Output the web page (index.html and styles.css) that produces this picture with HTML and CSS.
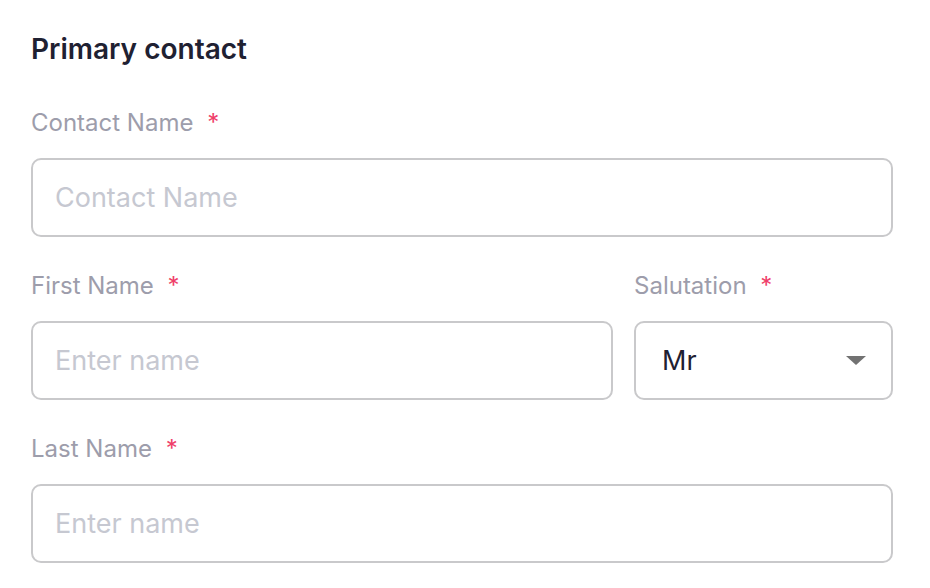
FILE: index.html
```html
<!DOCTYPE html>
<html lang="en">
<head>
  <meta charset="UTF-8">
  <meta name="viewport" content="width=device-width, initial-scale=1">
  <title>Primary contact</title>
  <link rel="stylesheet" href="styles.css">
</head>
<body>
  <!-- Formulario de contacto principal -->
  <form class="contact-form">
    <h2 class="section-title">Primary contact</h2>

    <div class="field">
      <label class="field-label" for="contactName">Contact Name <span class="required">*</span></label>
      <input class="field-input" id="contactName" type="text" placeholder="Contact Name">
    </div>

    <div class="row">
      <div class="field field-grow">
        <label class="field-label" for="firstName">First Name <span class="required">*</span></label>
        <input class="field-input" id="firstName" type="text" placeholder="Enter name">
      </div>
      <div class="field field-salutation">
        <label class="field-label" for="salutation">Salutation <span class="required">*</span></label>
        <div class="select-wrap">
          <select class="field-input field-select" id="salutation">
            <option>Mr</option>
            <option>Mrs</option>
            <option>Ms</option>
          </select>
          <span class="select-arrow"></span>
        </div>
      </div>
    </div>

    <div class="field">
      <label class="field-label" for="lastName">Last Name <span class="required">*</span></label>
      <input class="field-input" id="lastName" type="text" placeholder="Enter name">
    </div>
  </form>
</body>
</html>
```

FILE: styles.css
```css
/* Estilos globales */
html, body {
  margin: 0;
  padding: 0;
  background-color: #fff;
  font-family: Inter, "Noto Sans", sans-serif;
}
/* Contenedor del formulario */
.contact-form {
  padding: 31px 37px 0 31px;
  display: flex;
  flex-direction: column;
  gap: 34px;
}
/* Titulo de la seccion */
.section-title {
  margin: 0 0 7px;
  font-size: 28px;
  font-weight: 600;
  color: #1f2132;
  line-height: 36px;
}
/* Campo: etiqueta + input */
.field {
  display: flex;
  flex-direction: column;
  gap: 20px;
}
.field-label {
  font-size: 24px;
  line-height: 30px;
  color: #9d9dab;
}
.required {
  color: #ef3f6a;
  margin-left: 7px;
}
.field-input {
  box-sizing: border-box;
  height: 79px;
  width: 100%;
  padding: 0 22px;
  border: 2px solid #c9c9cb;
  border-radius: 10px;
  font-family: inherit;
  font-size: 27px;
  color: #1f2132;
  background: #fff;
  outline: none;
}
.field-input::placeholder {
  color: #c6c8d1;
}
/* Fila con nombre y saludo */
.row {
  display: flex;
  gap: 21px;
}
.field-grow {
  flex: 1;
}
.field-salutation {
  width: 259px;
}
/* Select con flecha propia */
.select-wrap {
  position: relative;
}
.field-select {
  appearance: none;
  -webkit-appearance: none;
  padding-left: 26px;
}
.select-arrow {
  position: absolute;
  right: 27px;
  top: 35px;
  width: 0;
  height: 0;
  border-left: 10px solid transparent;
  border-right: 10px solid transparent;
  border-top: 9px solid #727272;
  pointer-events: none;
}
```
